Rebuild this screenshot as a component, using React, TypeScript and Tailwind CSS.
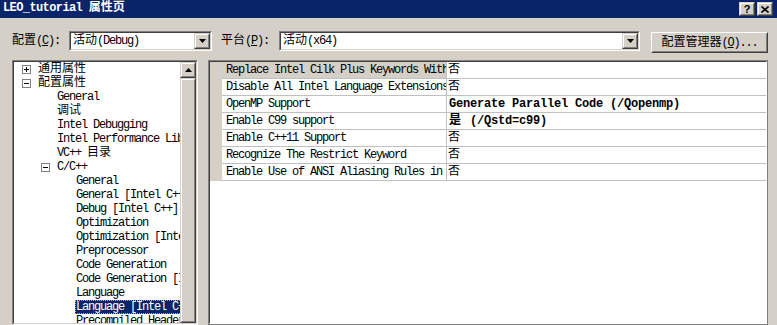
import React from 'react';

const FONT = "font-['Liberation_Mono','Noto_Sans_CJK_SC',monospace]";

// CJK runs keep normal spacing, Latin gets squeezed to the 6px cell of SimSun
function Txt({ s }: { s: string }) {
  const parts = s.split(/([\u3000-\u9fff\uff00-\uffef]+)/);
  return (
    <>
      {parts.map((p, i) =>
        /[\u3000-\u9fff\uff00-\uffef]/.test(p) ? (
          <span key={i} className="tracking-normal">{p}</span>
        ) : (
          <React.Fragment key={i}>{p}</React.Fragment>
        )
      )}
    </>
  );
}

function Raised({ className = '', children }: { className?: string; children?: React.ReactNode }) {
  return (
    <div className={`border border-t-[#d4d0c8] border-l-[#d4d0c8] border-b-[#404040] border-r-[#404040] bg-[#d4d0c8] ${className}`}>
      <div className="w-full h-full border border-t-white border-l-white border-b-[#808080] border-r-[#808080] flex items-center justify-center">
        {children}
      </div>
    </div>
  );
}

function DownArrow() {
  return (
    <svg width="7" height="4" viewBox="0 0 7 4">
      <polygon points="0,0 7,0 3.5,4" fill="#000" />
    </svg>
  );
}

function Combo({ value, className }: { value: string; className: string }) {
  return (
    <div className={`h-[20px] border border-t-[#808080] border-l-[#808080] border-b-white border-r-white ${className}`}>
      <div className="h-full border border-t-[#404040] border-l-[#404040] border-b-[#d4d0c8] border-r-[#d4d0c8] bg-white flex">
        <div className="flex-1 pl-[2px] leading-[16px] text-[12px] tracking-[-1.2px] text-black overflow-hidden whitespace-nowrap">
          <Txt s={value} />
        </div>
        <Raised className="w-[16px] h-full">
          <DownArrow />
        </Raised>
      </div>
    </div>
  );
}

function ExpandBox({ open }: { open: boolean }) {
  return (
    <div className="relative w-[9px] h-[9px] border border-[#808080] bg-white">
      <div className="absolute left-[1px] top-[3px] w-[5px] h-px bg-black" />
      {!open && <div className="absolute left-[3px] top-[1px] w-px h-[5px] bg-black" />}
    </div>
  );
}

type Node = { label: string; level: 0 | 1 | 2; box?: 'open' | 'closed'; selected?: boolean };

const tree: Node[] = [
  { label: '通用属性', level: 0, box: 'closed' },
  { label: '配置属性', level: 0, box: 'open' },
  { label: 'General', level: 1 },
  { label: '调试', level: 1 },
  { label: 'Intel Debugging', level: 1 },
  { label: 'Intel Performance Libraries', level: 1 },
  { label: 'VC++ 目录', level: 1 },
  { label: 'C/C++', level: 1, box: 'open' },
  { label: 'General', level: 2 },
  { label: 'General [Intel C++]', level: 2 },
  { label: 'Debug [Intel C++]', level: 2 },
  { label: 'Optimization', level: 2 },
  { label: 'Optimization [Intel C++]', level: 2 },
  { label: 'Preprocessor', level: 2 },
  { label: 'Code Generation', level: 2 },
  { label: 'Code Generation [Intel C++]', level: 2 },
  { label: 'Language', level: 2 },
  { label: 'Language [Intel C++]', level: 2, selected: true },
  { label: 'Precompiled Headers', level: 2 },
  { label: 'Output Files', level: 2 },
];

const indent = { 0: 'w-[8px]', 1: 'w-[27px]', 2: 'w-[46px]' };

type Row = { name: string; value: string; bold?: boolean; current?: boolean };

const rows: Row[] = [
  { name: 'Replace Intel Cilk Plus Keywords With Serial Equivalents', value: '否', current: true },
  { name: 'Disable All Intel Language Extensions', value: '否' },
  { name: 'OpenMP Support', value: 'Generate Parallel Code (/Qopenmp)', bold: true },
  { name: 'Enable C99 support', value: '是 (/Qstd=c99)', bold: true },
  { name: 'Enable C++11 Support', value: '否' },
  { name: 'Recognize The Restrict Keyword', value: '否' },
  { name: 'Enable Use of ANSI Aliasing Rules in Serialized Code', value: '否' },
];

export default function App() {
  return (
    <div className={`w-[777px] h-[325px] bg-[#d4d0c8] flex flex-col overflow-hidden text-black ${FONT}`}>
      {/* title bar */}
      <div className="h-[18px] bg-[#0a246a] flex items-start">
        <div className="flex-1 pl-[3px] leading-[17px] text-[12px] font-bold text-white tracking-[-0.6px] whitespace-nowrap">
          <Txt s="LEO_tutorial 属性页" />
        </div>
        <div className="flex gap-[2px] pr-[4px] pt-[2px]">
          <Raised className="w-[16px] h-[14px]">
            <span className="text-[11px] font-bold leading-none font-['Liberation_Sans',sans-serif]">?</span>
          </Raised>
          <Raised className="w-[16px] h-[14px]">
            <svg width="8" height="7" viewBox="0 0 8 7">
              <path d="M0.5 0.5 L7.5 6.5 M7.5 0.5 L0.5 6.5" stroke="#000" strokeWidth="1.6" />
            </svg>
          </Raised>
        </div>
      </div>

      {/* configuration row */}
      <div className="mt-[13px] h-[21px] flex items-start pl-[12px] text-[12px] tracking-[-1.2px]">
        <div className="w-[57px] h-[20px] leading-[20px] whitespace-nowrap">
          <span className="tracking-normal">配置</span>(<span className="underline">C</span>):
        </div>
        <Combo value="活动(Debug)" className="w-[143px]" />
        <div className="ml-[9px] w-[58px] h-[20px] leading-[20px] whitespace-nowrap">
          <span className="tracking-normal">平台</span>(<span className="underline">P</span>):
        </div>
        <Combo value="活动(x64)" className="w-[361px]" />
        <div className="ml-[11px] mt-px w-[117px] h-[21px] border border-t-white border-l-white border-b-[#404040] border-r-[#404040]">
          <div className="h-full border border-transparent border-b-[#808080] border-r-[#808080] flex items-center justify-center whitespace-nowrap">
            <span className="tracking-normal">配置管理器</span>(<span className="underline">O</span>)...
          </div>
        </div>
      </div>

      {/* body */}
      <div className="mt-[8px] flex-1 min-h-0 flex pl-[12px]">
        {/* tree */}
        <div className="w-[186px] h-full border border-t-[#808080] border-l-[#808080] border-b-white border-r-white">
          <div className="h-full flex border border-t-[#404040] border-l-[#404040] border-b-[#d4d0c8] border-r-[#d4d0c8] bg-white">
            <div className="flex-1 min-w-0 overflow-hidden text-[12px] tracking-[-1.2px]">
              {tree.map((n, i) => (
                <div key={i} className="h-[14px] flex items-center whitespace-nowrap">
                  <div className={`${indent[n.level]} shrink-0`} />
                  <div className="w-[16px] shrink-0 flex items-center">
                    {n.box && <ExpandBox open={n.box === 'open'} />}
                  </div>
                  <span
                    className={
                      n.selected
                        ? '-ml-px pl-px pr-[40px] h-[14px] leading-[14px] bg-[#0a246a] text-white outline-1 outline-dotted outline-[#d8b040] -outline-offset-1'
                        : '-ml-px pl-px h-[14px] leading-[14px]'
                    }
                  >
                    <Txt s={n.label} />
                  </span>
                </div>
              ))}
            </div>
            {/* vertical scrollbar */}
            <div className="w-[16px] shrink-0 flex flex-col bg-[#e6e3de]">
              <Raised className="h-[16px] shrink-0">
                <svg width="7" height="4" viewBox="0 0 7 4">
                  <polygon points="0,4 7,4 3.5,0" fill="#000" />
                </svg>
              </Raised>
              <Raised className="flex-1" />
            </div>
          </div>
        </div>

        {/* property grid */}
        <div className="ml-[10px] w-[560px] h-full border border-[#808080]">
          <div className="h-full border border-transparent border-t-[#404040] border-l-[#404040] bg-white flex flex-col text-[12px]">
            {rows.map((r, i) => (
              <div key={i} className="h-[17px] flex shrink-0">
                <div className="w-[12px] shrink-0 bg-[#d4d0c8]" />
                <div
                  className={`w-[225px] shrink-0 border-b border-r border-[#c0c0c0] pl-[4px] pr-px leading-[16px] tracking-[-1.2px] overflow-hidden whitespace-nowrap ${
                    r.current ? 'bg-[#d4d0c8]' : 'bg-white'
                  }`}
                >
                  <Txt s={r.name} />
                </div>
                <div
                  className={`flex-1 border-b border-[#c0c0c0] pl-[1px] leading-[16px] overflow-hidden whitespace-nowrap ${
                    r.bold ? 'font-bold tracking-[-0.2px]' : 'tracking-[-1.2px]'
                  }`}
                >
                  {r.bold && r.value.startsWith('是') ? (
                    <>
                      <span className="tracking-normal pl-px">是</span>
                      <span className="pl-[9px]">(/Qstd=c99)</span>
                    </>
                  ) : (
                    <span className={r.bold ? 'pl-px' : ''}>
                      <Txt s={r.value} />
                    </span>
                  )}
                </div>
              </div>
            ))}
            <div className="flex-1" />
          </div>
        </div>
      </div>
    </div>
  );
}
